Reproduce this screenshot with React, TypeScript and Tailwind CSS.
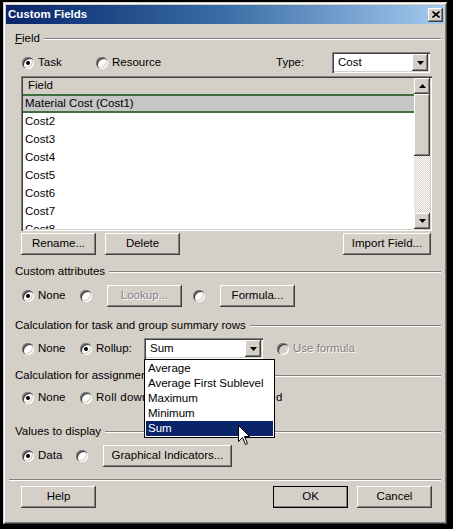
import type { ReactNode } from 'react';

const raised =
  'bg-[#d4d0c8] shadow-[inset_-1px_-1px_0_#404040,inset_1px_1px_0_#ffffff,inset_-2px_-2px_0_#808080]';
const sunken =
  'shadow-[inset_1px_1px_0_#808080,inset_2px_2px_0_#404040,inset_-1px_-1px_0_#ffffff,inset_-2px_-2px_0_#d4d0c8]';

function Tri({ up }: { up?: boolean }) {
  return (
    <svg width="7" height="4" viewBox="0 0 7 4">
      <polygon points={up ? '0,4 7,4 3.5,0' : '0,0 7,0 3.5,4'} fill="#000" />
    </svg>
  );
}

function Radio({ checked, disabled }: { checked?: boolean; disabled?: boolean }) {
  return (
    <span
      className={`flex h-3 w-3 shrink-0 items-center justify-center rounded-full shadow-[inset_1px_1px_0_#808080,inset_2px_2px_0_#404040,inset_-1px_-1px_0_#ffffff,inset_-2px_-2px_0_#d4d0c8] ${
        disabled ? 'bg-[#d4d0c8]' : 'bg-white'
      }`}
    >
      {checked && <span className="h-1 w-1 rounded-full bg-black" />}
    </span>
  );
}

function Option({ children, checked, disabled, className = '' }: { children?: ReactNode; checked?: boolean; disabled?: boolean; className?: string }) {
  return (
    <div className={`flex shrink-0 items-center gap-[4px] ${className}`}>
      <Radio checked={checked} disabled={disabled} />
      {children && (
        <span className={`whitespace-nowrap ${disabled ? 'text-[#808080] [text-shadow:1px_1px_0_#ffffff]' : ''}`}>{children}</span>
      )}
    </div>
  );
}

function Btn({ children, className = '', disabled, isDefault }: { children: ReactNode; className?: string; disabled?: boolean; isDefault?: boolean }) {
  return (
    <button
      className={`flex h-[22px] shrink-0 items-center justify-center ${raised} ${
        isDefault ? 'outline outline-1 outline-black -outline-offset-1' : ''
      } ${disabled ? 'text-[#808080] [text-shadow:1px_1px_0_#ffffff]' : ''} ${className}`}
    >
      {children}
    </button>
  );
}

function GroupHeading({ children, className = '' }: { children: ReactNode; className?: string }) {
  return (
    <div className={`flex h-[14px] items-center pl-[9px] pr-[3px] ${className}`}>
      <span className="whitespace-nowrap">{children}</span>
      <span className="ml-[4px] h-[2px] flex-1 border-y border-t-[#808080] border-b-white" />
    </div>
  );
}

function Combo({ value, className = '' }: { value: string; className?: string }) {
  return (
    <div className={`flex h-[21px] items-center bg-white p-[2px] ${sunken} ${className}`}>
      <span className="flex-1 pl-[4px]">{value}</span>
      <span className={`flex h-[17px] w-[16px] items-center justify-center ${raised}`}>
        <Tri />
      </span>
    </div>
  );
}

const rows = ['Cost2', 'Cost3', 'Cost4', 'Cost5', 'Cost6', 'Cost7', 'Cost8'];
const rollups = ['Average', 'Average First Sublevel', 'Maximum', 'Minimum', 'Sum'];

export default function App() {
  return (
    <div className="h-[529px] w-[453px] overflow-hidden bg-black pl-[3px] pt-[2px] font-['Liberation_Sans',Arial,sans-serif] text-[11.5px] text-black">
      <div className="flex h-[522px] w-[444px] flex-col bg-[#d4d0c8] p-[3px] shadow-[inset_1px_1px_0_#d4d0c8,inset_-1px_-1px_0_#404040,inset_2px_2px_0_#ffffff,inset_-2px_-2px_0_#808080]">
        {/* Title bar */}
        <div className="flex h-[19px] items-center justify-between bg-linear-to-r from-[#0a246a] via-[#3a6ea5] to-[#a6caf0] pl-[2px] pr-[1px]">
          <span className="text-[11.5px] font-bold text-white">Custom Fields</span>
          <span className={`flex h-[14px] w-[15px] items-center justify-center ${raised}`}>
            <svg width="8" height="7" viewBox="0 0 8 7">
              <path d="M0.5 0.5 L7.5 6.5 M7.5 0.5 L0.5 6.5" stroke="#000" strokeWidth="1.6" />
            </svg>
          </span>
        </div>

        {/* Field group */}
        <GroupHeading className="mt-[8px]">
          <span className="underline">F</span>ield
        </GroupHeading>

        <div className="mt-[6px] flex h-[21px] items-center pl-[16px]">
          <Option checked className="w-[74px]">Task</Option>
          <Option className="w-[180px]">Resource</Option>
          <span className="w-[56px]">Type:</span>
          <Combo value="Cost" className="w-[98px]" />
        </div>

        <div className={`relative ml-[15px] mt-[3px] flex h-[155px] w-[411px] bg-white p-[2px] ${sunken}`}>
          <div className="flex-1 overflow-hidden">
            <div className="flex h-[16px] items-center bg-[#d4d0c8] pl-[5px]">Field</div>
            <div className="flex h-[19px] items-center border-y-2 border-[#3f6f3f] bg-[#c6c6c6] pl-[2px]">
              Material Cost (Cost1)
            </div>
            {rows.map((r) => (
              <div key={r} className="flex h-[18px] items-center pl-[2px]">
                {r}
              </div>
            ))}
          </div>
          <div className="flex w-[16px] flex-col">
            <span className={`flex h-[16px] items-center justify-center ${raised}`}>
              <Tri up />
            </span>
            <span className={`h-[62px] ${raised}`} />
            <span className="flex-1 bg-[repeating-conic-gradient(#d4d0c8_0%_25%,#ffffff_0%_50%)] bg-[length:2px_2px]" />
            <span className={`flex h-[16px] items-center justify-center ${raised}`}>
              <Tri />
            </span>
          </div>
        </div>

        <div className="mt-[2px] flex items-center pl-[15px] pr-[13px]">
          <Btn className="w-[75px]">Rename...</Btn>
          <Btn className="ml-[9px] w-[75px]">Delete</Btn>
          <span className="flex-1" />
          <Btn className="w-[88px]">Import Field...</Btn>
        </div>

        {/* Custom attributes */}
        <GroupHeading className="mt-[10px]">Custom attributes</GroupHeading>
        <div className="mt-[6px] flex h-[22px] items-center pl-[16px]">
          <Option checked className="w-[58px]">None</Option>
          <Option className="w-[27px]" />
          <Btn disabled className="w-[75px]">Lookup...</Btn>
          <Option className="ml-[11px] w-[27px]" />
          <Btn className="w-[75px]">Formula...</Btn>
        </div>

        {/* Calculation for task rows */}
        <GroupHeading className="mt-[12px]">Calculation for task and group summary rows</GroupHeading>
        <div className="relative z-10 mt-[5px] flex h-[21px] items-center pl-[16px]">
          <Option className="w-[58px]">None</Option>
          <Option checked className="w-[64px]">Rollup:</Option>
          <div className="relative">
            <Combo value="Sum" className="w-[119px]" />
            <div className="absolute left-0 top-[21px] w-[131px] border border-black bg-white p-px">
              {rollups.map((r) => (
                <div
                  key={r}
                  className={`flex h-[15px] items-center pl-[2px] ${r === 'Sum' ? 'bg-[#0a246a] text-white' : ''}`}
                >
                  {r}
                </div>
              ))}
              <svg className="absolute left-[93px] top-[65px]" width="12" height="20" viewBox="0 0 12 20">
                <path
                  d="M0.5 0.5 L0.5 16.5 L4.5 12.5 L7.5 19.5 L9.5 18.5 L6.5 11.5 L11.5 11.5 Z"
                  fill="#fff"
                  stroke="#000"
                  strokeWidth="1"
                />
              </svg>
            </div>
          </div>
          <Option disabled className="ml-[14px]">Use formula</Option>
        </div>

        {/* Calculation for assignment rows */}
        <GroupHeading className="mt-[10px]">Calculation for assignment rows</GroupHeading>
        <div className="mt-[4px] flex h-[21px] items-center pl-[16px]">
          <Option checked className="w-[58px]">None</Option>
          <Option className="tracking-[0.25px]">Roll down unless manually entered</Option>
        </div>

        {/* Values to display */}
        <GroupHeading className="mt-[17px]">Values to display</GroupHeading>
        <div className="mt-[6px] flex h-[22px] items-center pl-[16px]">
          <Option checked className="w-[54px]">Data</Option>
          <Option className="w-[27px]" />
          <Btn className="w-[129px]">Graphical Indicators...</Btn>
        </div>

        <div className="mx-[3px] mt-[12px] h-[2px] border-y border-t-[#808080] border-b-white" />

        <div className="mt-[5px] flex items-center pl-[15px] pr-[12px]">
          <Btn className="w-[75px]">Help</Btn>
          <span className="flex-1" />
          <Btn isDefault className="w-[75px]">OK</Btn>
          <Btn className="ml-[9px] w-[75px]">Cancel</Btn>
        </div>
      </div>
    </div>
  );
}
